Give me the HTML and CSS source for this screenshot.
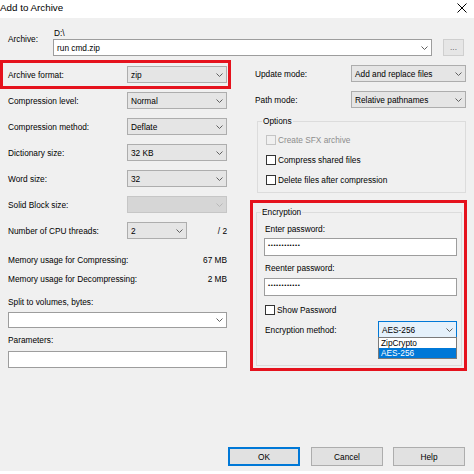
FILE: index.html
```html
<!DOCTYPE html>
<html>
<head>
<meta charset="utf-8">
<title>Add to Archive</title>
<link rel="stylesheet" href="styles.css">
</head>
<body>
<div class="window">
  <div class="titlebar">
    <span class="title">Add to Archive</span>
    <svg class="close" viewBox="0 0 10 10" width="10" height="10"><path d="M0.5 0.5L9.5 9.5M9.5 0.5L0.5 9.5" stroke="#000" stroke-width="1"/></svg>
  </div>
  <div class="content">
    <div class="archive">
      <span class="archive-label">Archive:</span>
      <span class="archive-dir">D:\</span>
      <div class="combo edit archive-path"><span>run cmd.zip</span><svg class="chev" viewBox="0 0 7 4" width="7" height="4"><path d="M0.5 0.5L3.5 3.5L6.5 0.5" fill="none" stroke="#606060"/></svg></div>
      <div class="btn browse">...</div>
    </div>

    <div class="main">
      <div class="left">
        <div class="hl hl-format">
          <div class="row"><span>Archive format:</span><div class="combo"><span>zip</span><svg class="chev" viewBox="0 0 7 4" width="7" height="4"><path d="M0.5 0.5L3.5 3.5L6.5 0.5" fill="none" stroke="#606060"/></svg></div></div>
        </div>
        <div class="rows">
          <div class="row"><span>Compression level:</span><div class="combo"><span>Normal</span><svg class="chev" viewBox="0 0 7 4" width="7" height="4"><path d="M0.5 0.5L3.5 3.5L6.5 0.5" fill="none" stroke="#606060"/></svg></div></div>
          <div class="row"><span>Compression method:</span><div class="combo"><span>Deflate</span><svg class="chev" viewBox="0 0 7 4" width="7" height="4"><path d="M0.5 0.5L3.5 3.5L6.5 0.5" fill="none" stroke="#606060"/></svg></div></div>
          <div class="row"><span>Dictionary size:</span><div class="combo"><span>32 KB</span><svg class="chev" viewBox="0 0 7 4" width="7" height="4"><path d="M0.5 0.5L3.5 3.5L6.5 0.5" fill="none" stroke="#606060"/></svg></div></div>
          <div class="row"><span>Word size:</span><div class="combo"><span>32</span><svg class="chev" viewBox="0 0 7 4" width="7" height="4"><path d="M0.5 0.5L3.5 3.5L6.5 0.5" fill="none" stroke="#606060"/></svg></div></div>
          <div class="row"><span>Solid Block size:</span><div class="combo disabled"><span></span><svg class="chev" viewBox="0 0 7 4" width="7" height="4"><path d="M0.5 0.5L3.5 3.5L6.5 0.5" fill="none" stroke="#b8b8b8"/></svg></div></div>
          <div class="row row-cpu"><span>Number of CPU threads:</span><div class="combo"><span>2</span><svg class="chev" viewBox="0 0 7 4" width="7" height="4"><path d="M0.5 0.5L3.5 3.5L6.5 0.5" fill="none" stroke="#606060"/></svg></div><span class="num">/ 2</span></div>
        </div>
        <div class="mem">
          <div class="memrow"><span>Memory usage for Compressing:</span><span>67 MB</span></div>
          <div class="memrow"><span>Memory usage for Decompressing:</span><span>2 MB</span></div>
        </div>
        <div class="field split">
          <div class="flabel">Split to volumes, bytes:</div>
          <div class="combo edit wide"><span></span><svg class="chev" viewBox="0 0 7 4" width="7" height="4"><path d="M0.5 0.5L3.5 3.5L6.5 0.5" fill="none" stroke="#606060"/></svg></div>
        </div>
        <div class="field params">
          <div class="flabel">Parameters:</div>
          <div class="textbox wide"></div>
        </div>
      </div>

      <div class="right">
        <div class="rrow"><span>Update mode:</span><div class="combo"><span>Add and replace files</span><svg class="chev" viewBox="0 0 7 4" width="7" height="4"><path d="M0.5 0.5L3.5 3.5L6.5 0.5" fill="none" stroke="#606060"/></svg></div></div>
        <div class="rrow path"><span>Path mode:</span><div class="combo"><span>Relative pathnames</span><svg class="chev" viewBox="0 0 7 4" width="7" height="4"><path d="M0.5 0.5L3.5 3.5L6.5 0.5" fill="none" stroke="#606060"/></svg></div></div>

        <fieldset class="group options">
          <legend>Options</legend>
          <div class="cbrow disabled"><span class="cb"></span><span>Create SFX archive</span></div>
          <div class="cbrow"><span class="cb"></span><span>Compress shared files</span></div>
          <div class="cbrow"><span class="cb"></span><span>Delete files after compression</span></div>
        </fieldset>

        <div class="hl hl-enc">
          <fieldset class="group enc">
            <legend>Encryption</legend>
            <div class="elabel first">Enter password:</div>
            <div class="textbox pw"><span>••••••••••••</span></div>
            <div class="elabel">Reenter password:</div>
            <div class="textbox pw pw2"><span>••••••••••••</span></div>
            <div class="cbrow show"><span class="cb"></span><span>Show Password</span></div>
            <div class="erow">
              <span>Encryption method:</span>
              <div class="combo active"><span>AES-256</span><svg class="chev" viewBox="0 0 7 4" width="7" height="4"><path d="M0.5 0.5L3.5 3.5L6.5 0.5" fill="none" stroke="#606060"/></svg>
                <div class="dropdown">
                  <div class="opt">ZipCrypto</div>
                  <div class="opt sel">AES-256</div>
                </div>
              </div>
            </div>
          </fieldset>
        </div>
      </div>
    </div>

    <div class="footer">
      <div class="btn default">OK</div>
      <div class="btn">Cancel</div>
      <div class="btn">Help</div>
    </div>
  </div>
</div>
</body>
</html>
```

FILE: styles.css
```css
* { box-sizing: border-box; }

html, body {
  margin: 0;
  padding: 0;
  background: #ffffff;
}

body {
  width: 474px;
  height: 474px;
  overflow: hidden;
  font-family: "Liberation Sans", Arial, sans-serif;
  font-size: 8.3px;
  line-height: 12px;
  color: #000;
}

.window {
  height: 471px;
  background: #f0f0f0;
  display: flex;
  flex-direction: column;
}

.titlebar {
  height: 18px;
  background: #fff;
  display: flex;
  align-items: center;
  justify-content: space-between;
  padding: 0 7px 2px 0;
}

.title {
  font-size: 9.8px;
  line-height: 12px;
}

.close { display: block; }

.content {
  flex: 1;
  display: flex;
  flex-direction: column;
  padding: 9px 0 5px 0;
}

/* archive row */
.archive {
  display: grid;
  grid-template-columns: 53px 379px 11px 21px;
  grid-template-rows: 12px 17px;
  align-items: center;
}

.archive-label {
  grid-row: 1 / 3;
  grid-column: 1;
  padding-left: 8px;
  padding-bottom: 6px;
}

.archive-dir {
  grid-row: 1;
  grid-column: 2;
  padding-left: 1px;
}

.archive-path {
  grid-row: 2;
  grid-column: 2;
  height: 15px;
}

/* combos */
.combo {
  display: flex;
  align-items: center;
  justify-content: space-between;
  height: 17px;
  background: #e5e5e5;
  border: 1px solid #adadad;
  padding: 0 3px 0 3px;
  white-space: nowrap;
}

.combo.edit {
  background: #fff;
  border-color: #9d9d9d;
}

.combo.disabled {
  background: #d6d6d6;
  border-color: #c6c6c6;
}

.combo.active {
  position: relative;
  background: #e5f1fb;
  border-color: #0078d7;
}

.chev { display: block; flex: none; }

.textbox {
  height: 17px;
  background: #fff;
  border: 1px solid #9d9d9d;
}

/* main layout */
.main {
  display: grid;
  grid-template-columns: 231px 217px;
  column-gap: 19px;
  margin-top: 4px;
  align-items: start;
}

.hl {
  border: 3px solid #e5121d;
}

.hl-format {
  padding: 3px 1px 3px 5px;
}

.row {
  display: grid;
  grid-template-columns: 119px 100px;
  align-items: center;
  height: 17px;
  white-space: nowrap;
}

.row-cpu {
  grid-template-columns: 119px 60px 40px;
}

.row-cpu .num { text-align: right; }

.rows {
  padding-left: 8px;
  width: 227px;
  margin-top: 3px;
  display: flex;
  flex-direction: column;
  gap: 9px;
}

.mem {
  padding-left: 8px;
  width: 227px;
  margin-top: 15px;
  display: flex;
  flex-direction: column;
  gap: 7px;
}

.memrow {
  display: flex;
  justify-content: space-between;
}

.field {
  padding-left: 8px;
  width: 227px;
}

.split { margin-top: 11px; }
.split .combo { margin-top: 4px; height: 16px; }

.params { margin-top: 6px; }
.params .textbox { margin-top: 5px; height: 17px; }

/* right column */
.right {
  padding-top: 5px;
}

.rrow {
  display: grid;
  grid-template-columns: 96px 115px;
  align-items: center;
  height: 17px;
  padding-left: 5px;
  white-space: nowrap;
}

.rrow.path { margin-top: 9px; }

.group {
  margin: 0;
  border: 1px solid #dcdcdc;
  min-width: 0;
}

.group legend {
  padding: 0 1px;
  margin-left: -4px;
  line-height: 10px;
}

.options {
  margin: 8px 1px 0 7px;
  padding: 0 4px 6px 8px;
}

.cbrow {
  display: flex;
  align-items: center;
  gap: 2px;
  height: 12px;
  margin-top: 8px;
  white-space: nowrap;
}

.cb {
  width: 10px;
  height: 10px;
  background: #fff;
  border: 1px solid #333;
  flex: none;
}

.cbrow.disabled { color: #8d8d8d; }
.cbrow.disabled .cb {
  border-color: #c4c4c4;
  background: #f0f0f0;
}

.hl-enc {
  margin-top: 7px;
  padding: 4px 2px 2px 3px;
}

.enc {
  padding: 0 4px 27px 8px;
}

.elabel { margin-top: 6px; }

.pw {
  margin-top: 3px;
  margin-left: -1px;
  height: 18px;
  display: flex;
  align-items: center;
  padding: 0 0 4px 3px;
}

.pw span {
  font-size: 6px;
  letter-spacing: 0.6px;
  line-height: 6px;
}

.pw2 { margin-top: 4px; }

.cbrow.show { margin-top: 8px; }

.erow {
  display: grid;
  grid-template-columns: 113px 79px;
  align-items: center;
  margin-top: 5px;
  white-space: nowrap;
}

.dropdown {
  position: absolute;
  left: -1px;
  right: -1px;
  top: 100%;
  background: #fff;
  border: 1px solid #7a7a7a;
}

.opt {
  height: 10px;
  line-height: 10px;
  padding-left: 2px;
}

.opt.sel {
  background: #0078d7;
  color: #fff;
}

/* footer */
.footer {
  margin-top: auto;
  display: flex;
  justify-content: flex-end;
  gap: 11px;
  padding-right: 9px;
}

.btn {
  display: flex;
  align-items: center;
  justify-content: center;
  width: 72px;
  height: 19px;
  background: #e1e1e1;
  border: 1px solid #adadad;
}

.btn.default {
  border-color: #0078d7;
  box-shadow: inset 0 0 0 1px #0078d7;
}

.footer .btn:last-child { margin-left: -1px; }

.btn.browse {
  grid-row: 2;
  grid-column: 4;
  height: 17px;
  width: 21px;
  color: #6d6d6d;
  border-color: #cfcfcf;
  background: #e6e6e6;
  line-height: 8px;
  padding-bottom: 2px;
}
```
